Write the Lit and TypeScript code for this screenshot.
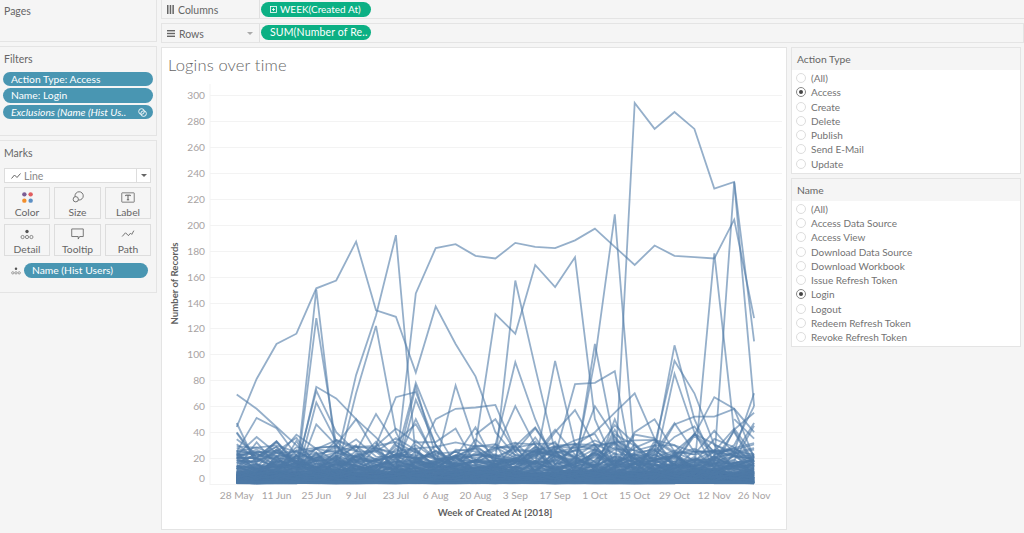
import { LitElement, html, css, svg } from "lit";
import { customElement } from "lit/decorators.js";

const X0 = 236.7, DX = 19.9, Y0 = 484, DY = 1.296;
const sx = (i: number) => X0 + i * DX;
const sy = (v: number) => Y0 - v * DY;

function rng(seed: number) {
  return () => {
    seed |= 0; seed = (seed + 0x6d2b79f5) | 0;
    let t = Math.imul(seed ^ (seed >>> 15), 1 | seed);
    t = (t + Math.imul(t ^ (t >>> 7), 61 | t)) ^ t;
    return ((t ^ (t >>> 14)) >>> 0) / 4294967296;
  };
}

// Sparse hand-read series: [week index, value] pairs.
const HAND: number[][][] = [
  [[0,44],[1,81],[2,108],[3,116],[4,151],[5,157],[6,187],[7,134],[8,129],[9,86],[10,137],[11,108],[12,83],[13,40],[14,22]],
  [[8,12],[9,147],[10,182],[11,185],[12,176],[13,174],[14,186],[15,183],[16,182],[17,188],[18,197],[19,183],[20,169],[21,184],[22,176],[23,175],[24,174],[25,204],[26,128]],
  [[18,10],[19,4],[20,294],[21,274],[22,287],[23,274],[24,228],[25,233],[26,110]],
  [[0,69],[1,58],[2,44],[3,30],[4,18]],
  [[0,40],[1,20],[2,33],[3,14]],
  [[0,25],[1,51],[2,43],[3,22]],
  [[3,5],[4,128],[5,30],[6,10]],
  [[3,8],[4,150],[5,20],[6,8]],
  [[3,10],[4,75],[5,66],[6,50],[7,36],[8,20]],
  [[3,12],[4,72],[5,40],[6,25]],
  [[3,4],[4,63],[5,33],[6,18]],
  [[3,6],[4,46],[5,30],[6,14]],
  [[5,18],[6,84],[7,130],[8,192],[9,20],[10,10]],
  [[5,8],[6,70],[7,122],[8,40],[9,10]],
  [[4,20],[5,30],[6,50],[7,25],[8,12]],
  [[6,25],[7,54],[8,30],[9,20]],
  [[7,30],[8,67],[9,71],[10,30],[11,10]],
  [[8,20],[9,78],[10,40],[11,15]],
  [[8,12],[9,75],[10,22],[11,10]],
  [[8,8],[9,65],[10,30],[11,12]],
  [[8,15],[9,50],[10,18]],
  [[9,20],[10,50],[11,58],[12,59],[13,61],[14,25],[15,10]],
  [[10,15],[11,76],[12,30],[13,18]],
  [[11,20],[12,30],[13,131],[14,116],[15,169],[16,152],[17,175],[18,50],[19,15]],
  [[13,18],[14,157],[15,90],[16,25],[17,10]],
  [[13,30],[14,94],[15,50],[16,15]],
  [[13,25],[14,60],[15,30],[16,10]],
  [[12,38],[13,50],[14,25],[15,43],[16,20]],
  [[15,15],[16,95],[17,30],[18,10]],
  [[15,20],[16,40],[17,57],[18,30],[19,14]],
  [[15,10],[16,22],[17,77],[18,78],[19,87],[20,2]],
  [[17,12],[18,108],[19,30],[20,10]],
  [[16,25],[17,20],[18,60],[19,36],[20,16]],
  [[17,15],[18,96],[19,208],[20,20],[21,8]],
  [[16,15],[17,30],[18,40],[19,55],[20,70],[21,35],[22,15]],
  [[18,8],[19,50],[20,12],[21,30],[22,14]],
  [[19,15],[20,40],[21,50],[22,25],[23,10]],
  [[20,16],[21,25],[22,107],[23,50],[24,16]],
  [[20,8],[21,30],[22,95],[23,70],[24,30],[25,12]],
  [[21,14],[22,85],[23,40],[24,12]],
  [[21,20],[22,46],[23,52],[24,52],[25,58],[26,20]],
  [[22,25],[23,38],[24,67],[25,58],[26,40]],
  [[23,12],[24,178],[25,40],[26,14]],
  [[24,18],[25,233],[26,60]],
  [[24,30],[25,25],[26,70]],
  [[24,20],[25,30],[26,60]],
  [[24,12],[25,42],[26,55]],
  [[24,14],[25,18],[26,45]],
  [[25,50],[26,35]],
];

function buildPaths(): string[] {
  const out = HAND.map((s) => s.map(([i, v]) => `${sx(i).toFixed(1)},${sy(v).toFixed(1)}`).join(" "));
  const r = rng(20180528);
  for (let n = 0; n < 165; n++) {
    const tall = n >= 105;
    const base = tall ? 6 + r() * 16 : 0.6 + r() * 6.5;
    const pts: string[] = [];
    let prev = base;
    for (let i = 0; i < 27; i++) {
      let v = base * (0.2 + r() * 1.6) * 0.65 + prev * 0.35;
      prev = v;
      if (tall && r() < 0.1) v += 6 + r() * 16;
      else if (!tall && r() < 0.03) v += 4 + r() * 10;
      pts.push(`${sx(i).toFixed(1)},${sy(Math.max(0.3, v)).toFixed(1)}`);
    }
    out.push(pts.join(" "));
  }
  return out;
}
const LINES = buildPaths();
const YT = Array.from({ length: 16 }, (_, i) => i * 20);
const XT = ["28 May","11 Jun","25 Jun","9 Jul","23 Jul","6 Aug","20 Aug","3 Sep","17 Sep","1 Oct","15 Oct","29 Oct","12 Nov","26 Nov"];

const ACTIONS = ["(All)","Access","Create","Delete","Publish","Send E-Mail","Update"];
const NAMES = ["(All)","Access Data Source","Access View","Download Data Source","Download Workbook","Issue Refresh Token","Login","Logout","Redeem Refresh Token","Revoke Refresh Token"];

const detailIcon = html`<svg width="14" height="11" viewBox="0 0 16 13" fill="none" stroke="#777" stroke-width="1"><circle cx="8" cy="3" r="2" fill="#555" stroke="none"/><circle cx="2.8" cy="9.5" r="1.9"/><circle cx="8" cy="9.5" r="1.9"/><circle cx="13.2" cy="9.5" r="1.9"/></svg>`;
const pathLine = html`<svg width="14" height="10" viewBox="0 0 16 12" fill="none" stroke="#666" stroke-width="1.1"><path d="M1 9 L5 4.5 L8.5 8 L11 5 L12.5 6.5 L15 2"/></svg>`;

const CARDS = [
  { label: "Color", icon: html`<svg width="11" height="11" viewBox="0 0 14 14"><circle cx="3" cy="3" r="2.8" fill="#7b5d94"/><circle cx="11" cy="3" r="2.8" fill="#e15d5f"/><circle cx="3" cy="11" r="2.8" fill="#f28e2b"/><circle cx="11" cy="11" r="2.8" fill="#5c8fc4"/></svg>` },
  { label: "Size", icon: html`<svg width="12" height="12" viewBox="0 0 16 16" fill="none" stroke="#666" stroke-width="1.2"><circle cx="9.5" cy="6.5" r="5.5"/><circle cx="5" cy="11" r="3.5" fill="#f5f5f5"/></svg>` },
  { label: "Label", icon: html`<svg width="14" height="11" viewBox="0 0 18 14" fill="none" stroke="#777" stroke-width="1.2"><rect x="1" y="1" width="16" height="12" rx=".5"/><path d="M6 5.2V4h6v1.2M9 4v6M7.5 10h3" stroke="#555"/></svg>` },
  { label: "Detail", icon: detailIcon },
  { label: "Tooltip", icon: html`<svg width="13" height="12" viewBox="0 0 18 16" fill="none" stroke="#666" stroke-width="1.2"><path d="M1 1h16v10.5h-5l-2 3.5v-3.5H1z"/></svg>` },
  { label: "Path", icon: pathLine },
];

@customElement("app-root")
export class AppRoot extends LitElement {
  static styles = css`
    :host { display: block; width: 1024px; height: 533px; background: #f5f5f5; overflow: hidden;
      font-family: "Lato", "Noto Sans", sans-serif; font-size: 10.5px; color: #666; }
    * { box-sizing: border-box; }
    .page { display: grid; grid-template-columns: 157px 626px 230px; column-gap: 4px; height: 533px; }
    .side { display: flex; flex-direction: column; gap: 4px; }
    .box { border: 1px solid #e4e4e4; border-left: 0; padding: 5px 0 0 4px; }
    .box h3 { margin: 0; font-weight: 400; font-size: 10.5px; color: #666; line-height: 14px; }
    .pages { height: 43px; margin-top: -1px; padding-top: 4px; }
    .filters { height: 90px; }
    .pills { display: flex; flex-direction: column; gap: 2.2px; margin: 5.5px 3px 0 -1px; }
    .pill { height: 14.5px; border-radius: 8px; background: #4996b2; color: #fff; padding-left: 8px; line-height: 14.5px;
      font-size: 10.3px; white-space: nowrap; display: flex; align-items: center; justify-content: space-between; }
    .pill i { font-style: italic; }
    .pill svg { margin-right: 6px; }
    .marks { height: 153px; }
    .dd { display: flex; height: 15px; margin: 8px 5px 0 0; background: #fff; border: 1px solid #ddd; align-items: center; color: #888; }
    .dd .nm { flex: 1; display: flex; align-items: center; gap: 3px; padding-left: 6px; }
    .dd .arr { width: 14px; height: 100%; border-left: 1px solid #ddd; display: flex; align-items: center; justify-content: center; }
    .tri { width: 0; height: 0; border: 3px solid transparent; border-top: 3px solid #666; border-bottom: 0; }
    .mgrid { display: grid; grid-template-columns: 46px 47px 46px; column-gap: 4px; row-gap: 5px; margin: 4px 0 0 0; }
    .mk { height: 32px; border: 1px solid #ddd; display: flex; flex-direction: column; align-items: center; justify-content: flex-start; color: #666; font-size: 10.3px; line-height: 13px; }
    .mk .ic { height: 18px; flex: none; display: flex; align-items: center; justify-content: center; }
    .mrow { display: flex; align-items: center; margin: 7px 0 0 7px; gap: 3px; }
    .mrow .pill { width: 124px; height: 15px; padding-left: 8px; }
    .main { display: flex; flex-direction: column; }
    .shelves { display: flex; flex-direction: column; gap: 4px; height: 47px; }
    .shelf { height: 19px; display: flex; border: 1px solid #e4e4e4; border-width: 0 0 1px 1px; margin-right: -237px; }
    .shelf.rows { height: 20px; border-width: 1px; background: #f5f5f5; }
    .lab { width: 98px; display: flex; align-items: center; gap: 4px; padding-left: 5px; padding-top: 1px; border-right: 1px solid #e0e0e0; color: #666; position: relative; flex: none; }
    .lab .tri { position: absolute; right: 6px; top: 8px; border-top-color: #aaa; }
    .gpill { width: 110px; height: 15px; margin: 2px 0 0 1px; border-radius: 8px; background: #0cb084; color: #fff; font-size: 10px; line-height: 15px;
      display: flex; align-items: center; gap: 3px; white-space: nowrap; }
    .gpill.a { padding-left: 9px; }
    .gpill.b { padding-left: 9px; margin-top: 1px; font-size: 10.5px; letter-spacing: .15px; }
    .chart { width: 626px; height: 483px; background: #fff; border: 1px solid #e4e4e4; position: relative; }
    .title { height: 35px; padding: 7px 0 0 6px; font-size: 16.5px; font-weight: 300; color: #666; line-height: 20px; letter-spacing: .15px; }
    .chart svg { display: block; }
    .axis { font-family: "Lato", sans-serif; font-size: 10.2px; fill: #a8a3a3; }
    .atitle { font-family: "Lato", sans-serif; font-size: 9.6px; font-weight: 700; fill: #5f5f5f; }
    .right { display: flex; flex-direction: column; gap: 4px; padding-top: 47px; }
    .card { background: #fff; border: 1px solid #e4e4e4; padding-bottom: 2px; }
    .card header { height: 22px; background: #f5f5f5; padding-left: 5px; line-height: 22px; color: #666; font-size: 10.3px; }
    .radio { height: 14.25px; display: flex; align-items: center; gap: 5px; padding-left: 4px; color: #737373; font-size: 10px; line-height: 14px; white-space: nowrap; }
    .radio span { width: 10px; height: 10px; border-radius: 50%; border: 1px solid #ddd; flex: none; display: flex; align-items: center; justify-content: center; }
    .radio.on span { border-color: #888; }
    .radio.on span::after { content: ""; width: 4px; height: 4px; border-radius: 50%; background: #444; }
    .card .list { padding-top: 1px; }
  `;

  private radios(items: string[], on: string) {
    return items.map((t) => html`<div class="radio ${t === on ? "on" : ""}"><span></span>${t}</div>`);
  }

  private chart() {
    return svg`<svg width="624" height="447" viewBox="0 0 624 447">
      <defs><clipPath id="plot"><rect x="210" y="84" width="572" height="401"/></clipPath></defs>
      <g transform="translate(-162 -83)">
        <line x1="210" x2="210" y1="84" y2="485" stroke="#f3f3f3"/>
        ${YT.map((v) => svg`<line x1="210" x2="782" y1=${Math.round(sy(v)) + 0.5} y2=${Math.round(sy(v)) + 0.5} stroke="#f3f3f3"/>`)}
        ${YT.map((v) => svg`<text class="axis" x="205" y=${v === 0 ? 482 : sy(v) + 4} text-anchor="end">${v}</text>`)}
        ${XT.map((t, i) => svg`<text class="axis" x=${sx(i * 2)} y="499" text-anchor="middle">${t}</text>`)}
        <text class="atitle" transform="translate(178 283.5) rotate(-90)" text-anchor="middle">Number of Records</text>
        <text class="atitle" x="495" y="516" text-anchor="middle">Week of Created At [2018]</text>
        <g clip-path="url(#plot)">
        ${LINES.map((p) => svg`<polyline points=${p} fill="none" stroke="#4e79a7" stroke-opacity=".6" stroke-width="1.8" stroke-linejoin="miter"/>`)}
        </g>
      </g>
    </svg>`;
  }

  render() {
    return html`<div class="page">
      <div class="side">
        <div class="box pages"><h3>Pages</h3></div>
        <div class="box filters">
          <h3>Filters</h3>
          <div class="pills">
            <div class="pill">Action Type: Access</div>
            <div class="pill">Name: Login</div>
            <div class="pill"><i>Exclusions (Name (Hist Us..</i>
              <svg width="9" height="9" viewBox="0 0 9 9" fill="none" stroke="#fff" stroke-width=".9"><circle cx="3.5" cy="3.5" r="2.8"/><circle cx="5.6" cy="5.6" r="2.8"/></svg></div>
          </div>
        </div>
        <div class="box marks">
          <h3>Marks</h3>
          <div class="dd"><div class="nm"><svg width="10" height="8" viewBox="0 0 10 8" fill="none" stroke="#666"><path d="M0.5 6.5 L3.5 3 L6 5.5 L9.5 1.5"/></svg>Line</div><div class="arr"><div class="tri"></div></div></div>
          <div class="mgrid">
            ${CARDS.map((c) => html`<div class="mk"><div class="ic">${c.icon}</div>${c.label}</div>`)}
          </div>
          <div class="mrow">
            <svg width="10" height="8" viewBox="0 0 16 13" fill="none" stroke="#777" stroke-width="1.1"><circle cx="8" cy="3" r="2" fill="#555" stroke="none"/><circle cx="2.8" cy="9.5" r="1.9"/><circle cx="8" cy="9.5" r="1.9"/><circle cx="13.2" cy="9.5" r="1.9"/></svg>
            <div class="pill">Name (Hist Users)</div>
          </div>
        </div>
      </div>
      <div class="main">
        <div class="shelves">
          <div class="shelf">
            <div class="lab"><svg width="7" height="9" viewBox="0 0 7 9" fill="#666"><rect x="0" width="1.5" height="9"/><rect x="2.7" width="1.5" height="9"/><rect x="5.4" width="1.5" height="9"/></svg>Columns</div>
            <div class="gpill a"><svg width="7" height="7" viewBox="0 0 7 7" fill="none" stroke="#fff" stroke-width=".8"><rect x=".5" y=".5" width="6" height="6"/><path d="M3.5 2v3M2 3.5h3"/></svg>WEEK(Created At)</div>
          </div>
          <div class="shelf rows">
            <div class="lab"><svg width="8" height="7" viewBox="0 0 8 7" fill="#666"><rect width="8" height="1.4"/><rect y="2.8" width="8" height="1.4"/><rect y="5.6" width="8" height="1.4"/></svg>Rows<div class="tri"></div></div>
            <div class="gpill b">SUM(Number of Re..</div>
          </div>
        </div>
        <div class="chart">
          <div class="title">Logins over time</div>
          ${this.chart()}
        </div>
      </div>
      <div class="right">
        <div class="card"><header>Action Type</header><div class="list">${this.radios(ACTIONS, "Access")}</div></div>
        <div class="card"><header>Name</header><div class="list">${this.radios(NAMES, "Login")}</div></div>
      </div>
    </div>`;
  }
}
